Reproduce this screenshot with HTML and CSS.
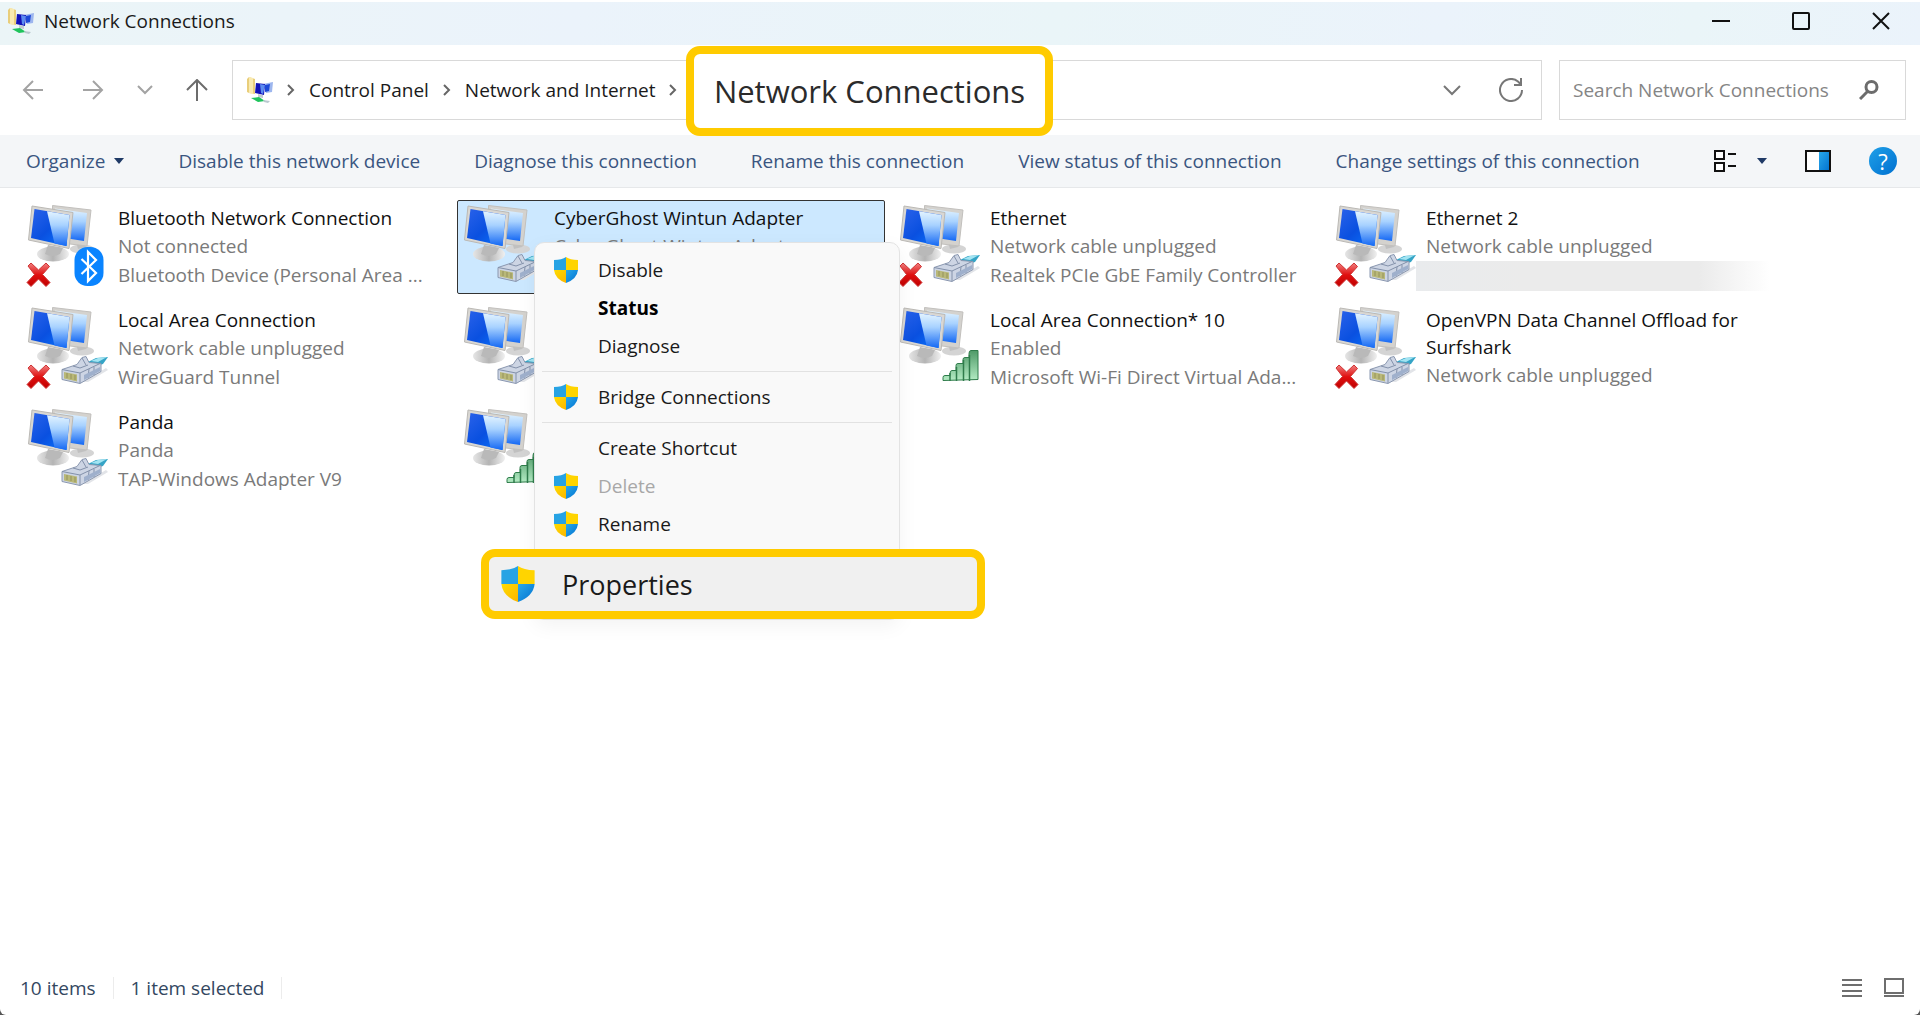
FILE: index.html
```
<!DOCTYPE html>
<html lang="en">
<head>
    <meta charset="UTF-8">
    <meta name="viewport" content="width=device-width, initial-scale=1.0">
    <title>Network Connections</title>
    <link rel="stylesheet" href="styles.css">
</head>
<body>
    <svg class="sprite" aria-hidden="true">
        <defs>
            <linearGradient id="screen" x1="0" y1="0" x2="1" y2="1">
                <stop offset="0" stop-color="#2a62ea"/>
                <stop offset="0.5" stop-color="#0a50e0"/>
                <stop offset="1" stop-color="#0a78ff"/>
            </linearGradient>
            <linearGradient id="glare" x1="0" y1="0" x2="0" y2="1">
                <stop offset="0" stop-color="#e4f4ff"/>
                <stop offset="0.4" stop-color="#a8d2ff"/>
                <stop offset="1" stop-color="#1468f4"/>
            </linearGradient>
            <linearGradient id="stand" x1="0" y1="0" x2="1" y2="0">
                <stop offset="0" stop-color="#e6e6e6"/>
                <stop offset="0.5" stop-color="#b4b4b4"/>
                <stop offset="1" stop-color="#f0f0f0"/>
            </linearGradient>
            <linearGradient id="bars" x1="0" y1="0" x2="0" y2="1">
                <stop offset="0" stop-color="#4f9a68"/>
                <stop offset="1" stop-color="#b4ecc4"/>
            </linearGradient>
            <linearGradient id="red" x1="0" y1="0" x2="0" y2="1">
                <stop offset="0" stop-color="#f08080"/>
                <stop offset="0.5" stop-color="#e01010"/>
                <stop offset="1" stop-color="#c00000"/>
            </linearGradient>
            <linearGradient id="blue" x1="0" y1="0" x2="1" y2="1">
                <stop offset="0" stop-color="#2aa9ea"/>
                <stop offset="1" stop-color="#0070d0"/>
            </linearGradient>
            <linearGradient id="gold" x1="0" y1="0" x2="1" y2="1">
                <stop offset="0" stop-color="#ffdc00"/>
                <stop offset="1" stop-color="#fbb500"/>
            </linearGradient>
        </defs>

        <symbol id="computers" viewBox="0 0 88 88">
            <ellipse cx="58" cy="46" rx="12" ry="4.500" fill="#d4d4d4"/>
            <path d="M52 38l2 8 8-2-2-6z" fill="#c0c0c0"/>
            <path d="M28.500 2.500L67 7l-4 36-34-4z" fill="#d4d2ce" stroke="#c2c0bd"/>
            <path d="M31 5.500l32 4.500-3 28-26-4z" fill="url(#glare)"/>
            <ellipse cx="29" cy="51" rx="16" ry="7.500" fill="url(#stand)"/>
            <path d="M24 42l-3 9q8 4 15 0l3-6z" fill="#b9b9b9"/>
            <path d="M8 3l41 6.500-4 36L4.500 37z" fill="#d9d7d3" stroke="#bbb9b5"/>
            <path d="M10.500 6l35 6-3 31L7 35z" fill="url(#screen)"/>
            <path d="M23 8.200L45.500 12l-3 31-12-2.500z" fill="url(#glare)"/>
        </symbol>
        <symbol id="unplugged" viewBox="0 0 88 88">
            <path d="M4 63l3-3 7.500 7 7.500-7 3.500 3.500-7 8 7.500 8-4 4-7.500-7.500-7.500 7.500-4-4 7.500-8z" fill="url(#red)" stroke="#cf3434" stroke-linejoin="round"/>
        </symbol>
        <symbol id="cable" viewBox="0 0 88 88">
            <path d="M58 77l24-14 2 2-20 12z" fill="#e2e4e8"/>
            <path d="M64 57l8-4 12-1-5 7-10 3z" fill="#35a4c6"/>
            <path d="M67 56l7-3 9-1-9 5z" fill="#a2e4f2"/>
            <path d="M38 64.500l15-5 5-7 4-1 3 6 12 1 0 8-21 12-18-4z" fill="#cdd5e4" stroke="#8b98b0"/>
            <path d="M38 64.500l18 3.500 20-9.500M56 68v10M49 61l7 2 8-3M58 53l4 7M65 64l-1 9M70 62v8" fill="none" stroke="#8391aa"/>
            <path d="M60 70l16-8v4l-16 9z" fill="#9fb0cc"/>
            <path d="M40 67l13 2.500v7l-13-3z" fill="#b9b878"/>
            <path d="M43 68v5M47 69v5M51 70v5" stroke="#94925c"/>
        </symbol>
        <symbol id="wifi" viewBox="0 0 88 88">
            <path d="M47 75.500v-3q0-2 2-2h5v-2q0-3 2-3h4v-5q0-2 2-2h5v-4q0-2 2-2h4v-4q0-3 2-3h7v29z" fill="url(#bars)" stroke="#2f7c4b" stroke-linejoin="round"/>
            <path d="M54 68v8M60.500 62v14M67.500 55v21M73.500 50v26" stroke="#2f7c4b" stroke-width="1.500"/>
        </symbol>
        <symbol id="bluetooth" viewBox="0 0 88 88">
            <rect x="50.500" y="44" width="29" height="39" rx="13" fill="#0a84ff"/>
            <path d="M57.500 56l14.500 14-8 8V49l8 8-14.500 14" fill="none" stroke="#fff" stroke-width="2.200"/>
        </symbol>
        <symbol id="shield" viewBox="0 0 26 26">
            <path d="M13 0Q9 3 1 3v10h12z" fill="#27a3e4"/>
            <path d="M13 0q4 3 12 3v10H13z" fill="#ffd400"/>
            <path d="M1 13q1 9 12 13V13z" fill="url(#gold)"/>
            <path d="M25 13q-1 9-12 13V13z" fill="url(#blue)"/>
        </symbol>
        <symbol id="net-folder" viewBox="0 0 26 26">
            <path d="M0 2l2-2 6 2v15l-6-1-2-1z" fill="#e9ce7a"/>
            <path d="M2 0l4 1v16l-4-1z" fill="#f9eab0"/>
            <path d="M16 7l10-2-1 10-6 1z" fill="#9db6ee"/>
            <path d="M18 8l5-1-1 7-4 1z" fill="#1c48d8"/>
            <path d="M9 6l9 1-1 11-9-2z" fill="#1212b8"/>
            <path d="M13 7l5 1-2 9-2-1z" fill="#5c8cf0"/>
            <path d="M11 17l5 1v3l-5-1z" fill="#c3c9d2"/>
            <path d="M4 21l8-1 6 4-7 1z" fill="#1fc45c"/>
            <path d="M16 23l7 1-2 2-4-1z" fill="#b9c7cf"/>
        </symbol>
        <symbol id="chevron" viewBox="0 0 8 12">
            <path d="M1 1l5 5-5 5" fill="none" stroke="#666" stroke-width="2"/>
        </symbol>
    </svg>

    <div class="window">
        <header class="titlebar">
            <svg class="folder-icon"><use href="#net-folder"/></svg>
            <h1>Network Connections</h1>
            <div class="window-buttons">
                <button type="button" aria-label="Minimize"><svg viewBox="0 0 18 18"><path d="M0 9h18"/></svg></button>
                <button type="button" aria-label="Maximize"><svg viewBox="0 0 18 18"><rect x="1" y="1" width="16" height="16" rx="1"/></svg></button>
                <button type="button" aria-label="Close"><svg viewBox="0 0 18 18"><path d="M1 1l16 16M17 1L1 17"/></svg></button>
            </div>
        </header>

        <nav class="navbar">
            <div class="nav-buttons">
                <button type="button" aria-label="Back"><svg class="pale" viewBox="0 0 22 22"><path d="M21 11H2M11 2l-9 9 9 9"/></svg></button>
                <button type="button" aria-label="Forward"><svg class="pale" viewBox="0 0 22 22"><path d="M1 11h19M11 2l9 9-9 9"/></svg></button>
                <button type="button" aria-label="Recent locations"><svg class="pale" viewBox="0 0 22 22"><path d="M4 7l7 7 7-7"/></svg></button>
                <button type="button" aria-label="Up"><svg viewBox="0 0 22 22"><path d="M11 22V1M1 11L11 1l10 10"/></svg></button>
            </div>
            <div class="address">
                <svg class="folder-icon"><use href="#net-folder"/></svg>
                <svg class="chevron"><use href="#chevron"/></svg>
                <a href="#">Control Panel</a>
                <svg class="chevron"><use href="#chevron"/></svg>
                <a href="#">Network and Internet</a>
                <svg class="chevron"><use href="#chevron"/></svg>
                <a class="current" href="#">Network Connections</a>
                <div class="address-buttons">
                    <button type="button" aria-label="Previous locations"><svg viewBox="0 0 24 24"><path d="M4 8l8 8 8-8"/></svg></button>
                    <button type="button" aria-label="Refresh"><svg viewBox="0 0 24 24"><path d="M23 12a11 11 0 1 1-4-8.500l3 3M22 0v7h-7"/></svg></button>
                </div>
            </div>
            <div class="search">
                <input type="text" aria-label="Search" placeholder="Search Network Connections">
                <svg viewBox="0 0 20 20"><circle cx="12.500" cy="7" r="5.500"/><path d="M9 11l-8 8"/></svg>
            </div>
        </nav>

        <div class="toolbar">
            <button type="button" class="organize">Organize <span class="arrow"></span></button>
            <button type="button">Disable this network device</button>
            <button type="button">Diagnose this connection</button>
            <button type="button">Rename this connection</button>
            <button type="button">View status of this connection</button>
            <button type="button">Change settings of this connection</button>
            <div class="toolbar-icons">
                <button type="button" class="view" aria-label="Change your view">
                    <svg width="24" height="24" viewBox="0 0 24 24"><path d="M2 2h9v8H2zM2 14h9v8H2z" fill="#fff" stroke="#111" stroke-width="2"/><path d="M15 5h8M15 17h8" stroke="#111" stroke-width="2"/></svg>
                    <span class="arrow"></span>
                </button>
                <button type="button" aria-label="Show the preview pane">
                    <svg width="26" height="24" viewBox="0 0 26 24"><path d="M1 2h24v20H1z" fill="#fff"/><path d="M14 2h11v20H14z" fill="url(#blue)"/><path d="M1 2h24v20H1z" fill="none" stroke="#111" stroke-width="2"/></svg>
                </button>
                <button type="button" class="help" aria-label="Help">?</button>
            </div>
        </div>

        <main class="files">
            <div class="item">
                <div class="icon"><svg><use href="#computers"/></svg><svg><use href="#unplugged"/></svg><svg><use href="#bluetooth"/></svg></div>
                <div class="text">
                    <h2>Bluetooth Network Connection</h2>
                    <p>Not connected</p>
                    <p>Bluetooth Device (Personal Area ...</p>
                </div>
            </div>
            <div class="item selected">
                <div class="icon"><svg><use href="#computers"/></svg><svg><use href="#cable"/></svg></div>
                <div class="text">
                    <h2>CyberGhost Wintun Adapter</h2>
                    <p>CyberGhost Wintun Adapter</p>
                </div>
            </div>
            <div class="item">
                <div class="icon"><svg><use href="#computers"/></svg><svg><use href="#unplugged"/></svg><svg><use href="#cable"/></svg></div>
                <div class="text">
                    <h2>Ethernet</h2>
                    <p>Network cable unplugged</p>
                    <p>Realtek PCIe GbE Family Controller</p>
                </div>
            </div>
            <div class="item">
                <div class="icon"><svg><use href="#computers"/></svg><svg><use href="#unplugged"/></svg><svg><use href="#cable"/></svg></div>
                <div class="text">
                    <h2>Ethernet 2</h2>
                    <p>Network cable unplugged</p>
                    <div class="hidden-name"></div>
                </div>
            </div>
            <div class="item">
                <div class="icon"><svg><use href="#computers"/></svg><svg><use href="#unplugged"/></svg><svg><use href="#cable"/></svg></div>
                <div class="text">
                    <h2>Local Area Connection</h2>
                    <p>Network cable unplugged</p>
                    <p>WireGuard Tunnel</p>
                </div>
            </div>
            <div class="item">
                <div class="icon"><svg><use href="#computers"/></svg><svg><use href="#cable"/></svg></div>
            </div>
            <div class="item">
                <div class="icon"><svg><use href="#computers"/></svg><svg><use href="#wifi"/></svg></div>
                <div class="text">
                    <h2>Local Area Connection* 10</h2>
                    <p>Enabled</p>
                    <p>Microsoft Wi-Fi Direct Virtual Ada...</p>
                </div>
            </div>
            <div class="item">
                <div class="icon"><svg><use href="#computers"/></svg><svg><use href="#unplugged"/></svg><svg><use href="#cable"/></svg></div>
                <div class="text">
                    <h2>OpenVPN Data Channel Offload for Surfshark</h2>
                    <p>Network cable unplugged</p>
                </div>
            </div>
            <div class="item">
                <div class="icon"><svg><use href="#computers"/></svg><svg><use href="#cable"/></svg></div>
                <div class="text">
                    <h2>Panda</h2>
                    <p>Panda</p>
                    <p>TAP-Windows Adapter V9</p>
                </div>
            </div>
            <div class="item">
                <div class="icon"><svg><use href="#computers"/></svg><svg><use href="#wifi"/></svg></div>
            </div>

            <div class="context-menu">
                <button type="button"><svg><use href="#shield"/></svg>Disable</button>
                <button type="button" class="default"><svg></svg>Status</button>
                <button type="button"><svg></svg>Diagnose</button>
                <hr>
                <button type="button"><svg><use href="#shield"/></svg>Bridge Connections</button>
                <hr>
                <button type="button"><svg></svg>Create Shortcut</button>
                <button type="button" disabled><svg><use href="#shield"/></svg>Delete</button>
                <button type="button"><svg><use href="#shield"/></svg>Rename</button>
                <button type="button" class="properties"><svg><use href="#shield"/></svg>Properties</button>
            </div>
        </main>

        <footer class="statusbar">
            <span>10 items</span>
            <span>1 item selected</span>
            <div class="layout-buttons">
                <button type="button" aria-label="Details"><svg viewBox="0 0 20 20"><path d="M0 2h20M0 7h20M0 13h20M0 18h20"/></svg></button>
                <button type="button" aria-label="Large icons"><svg viewBox="0 0 20 20"><path d="M1 1h18v14H1zM0 18h20"/></svg></button>
            </div>
        </footer>
    </div>
</body>
</html>
```
FILE: styles.css
```
* {
    box-sizing: border-box;
}

body {
    margin: 0;
    background: #555;
    color: #1a1a1a;
    font-family: "Open Sans", "Noto Sans", sans-serif;
    font-size: 19px;
}

h1, h2, p {
    margin: 0;
    font-size: inherit;
    font-weight: normal;
}

a {
    color: inherit;
    text-decoration: none;
}

button {
    padding: 0;
    border: none;
    background: none;
    color: inherit;
    font: inherit;
    white-space: nowrap;
}

button svg {
    display: block;
}

.sprite {
    position: absolute;
    width: 0;
    height: 0;
}

.window {
    display: flex;
    flex-direction: column;
    min-height: 100vh;
    background: white;
    border-radius: 0 0 6px 6px;
}

.folder-icon {
    width: 26px;
    height: 26px;
    flex: none;
}

/* Title bar */
.titlebar {
    display: flex;
    align-items: center;
    gap: 10px;
    height: 45px;
    padding: 0 30px 5px 8px;
    border-top: 2px solid white;
    background: linear-gradient(100deg, #ebf5f7, #ebf3fb 30%, #eaf5f8 55%, #ebf3fb 75%, #eaf5f8 88%, #ebf3fb);
}

.window-buttons {
    display: flex;
    gap: 62px;
    margin-left: auto;
}

.window-buttons svg {
    width: 18px;
    height: 18px;
    fill: none;
    stroke: #111;
    stroke-width: 2;
}

/* Navigation */
.navbar {
    display: flex;
    align-items: center;
    gap: 17px;
    height: 90px;
    padding: 0 14px 0 22px;
}

.nav-buttons {
    display: flex;
    gap: 30px;
    width: 193px;
}

.nav-buttons button:first-child {
    margin-right: 8px;
}

.nav-buttons svg {
    width: 22px;
    height: 22px;
    fill: none;
    stroke: #6c6c6c;
    stroke-width: 2;
}

.nav-buttons .pale {
    stroke: #a3a3a3;
}

.address {
    position: relative;
    display: flex;
    flex: 1;
    align-items: center;
    gap: 14px;
    height: 60px;
    padding: 0 18px 0 14px;
    border: 1px solid #d9d9d9;
}

.chevron {
    width: 8px;
    height: 12px;
    flex: none;
}

.current {
    position: absolute;
    top: -15px;
    left: 453px;
    width: 367px;
    height: 90px;
    border: 8px solid #ffcb00;
    border-radius: 14px;
    background: white;
    color: #2b2b2b;
    font-size: 31px;
    line-height: 74px;
    text-align: center;
    white-space: nowrap;
}

.address-buttons {
    display: flex;
    gap: 35px;
    margin-left: auto;
}

.address-buttons svg {
    width: 24px;
    height: 24px;
    fill: none;
    stroke: #777;
    stroke-width: 2;
}

.search {
    display: flex;
    align-items: center;
    width: 347px;
    height: 60px;
    padding: 0 26px 0 13px;
    border: 1px solid #d9d9d9;
}

.search input {
    flex: 1;
    min-width: 0;
    padding: 0;
    border: none;
    outline: none;
    font: inherit;
}

.search input::placeholder {
    color: #858585;
}

.search svg {
    width: 20px;
    height: 20px;
    fill: none;
    stroke: #6c6c6c;
    stroke-width: 3;
}

/* Toolbar */
.toolbar {
    display: flex;
    align-items: center;
    gap: 54px;
    height: 53px;
    padding: 0 23px 0 26px;
    border-bottom: 1px solid #e6e8ea;
    background: #f4f6f8;
    color: #3a5580;
}

.organize, .view {
    display: flex;
    align-items: center;
    gap: 9px;
}

.view {
    gap: 20px;
}

.arrow {
    border: 5px solid transparent;
    border-top: 6px solid #1f3a66;
    border-bottom: none;
}

.toolbar-icons {
    display: flex;
    align-items: center;
    gap: 38px;
    margin-left: auto;
}

.help {
    width: 28px;
    height: 28px;
    border-radius: 50%;
    background: linear-gradient(135deg, #1fa0e8, #0070d0);
    color: white;
    font-size: 22px;
    line-height: 28px;
}

/* Connections */
.files {
    position: relative;
    display: grid;
    flex: 1;
    grid-template-columns: repeat(auto-fill, 428px);
    grid-auto-rows: 94px;
    align-content: start;
    gap: 8px;
    padding: 12px 0 0 21px;
}

.item {
    display: flex;
    gap: 6px;
    padding: 2px 0 0 2px;
    border: 1px solid transparent;
    border-radius: 2px;
}

.selected {
    border-color: #333;
    background: #cce8ff;
}

.icon {
    display: grid;
    flex: none;
}

.icon svg {
    grid-area: 1 / 1;
    width: 88px;
    height: 88px;
}

.text {
    flex: 1;
    padding-top: 2px;
    color: #7a7a7a;
}

.text h2 {
    padding-right: 8px;
    color: #111;
    line-height: 27px;
}

.text p {
    line-height: 29px;
    white-space: nowrap;
}

.hidden-name {
    width: 354px;
    height: 30px;
    margin-left: -10px;
    background: linear-gradient(90deg, #e9ebed, #ebebeb 30%, #ebebeb 80%, white);
}

/* Context menu */
.context-menu {
    position: absolute;
    top: 54px;
    left: 534px;
    width: 366px;
    padding: 8px 0 0;
    border: 1px solid #e3e3e3;
    border-radius: 10px;
    background: #f9f9f9;
    box-shadow: 0 6px 20px rgba(0, 0, 0, 0.05);
}

.context-menu button {
    display: flex;
    align-items: center;
    gap: 19px;
    width: 100%;
    height: 38px;
    padding-left: 18px;
}

.context-menu svg {
    width: 26px;
    height: 26px;
}

.context-menu hr {
    height: 1px;
    margin: 6px 7px;
    border: none;
    background: #e2e2e2;
}

.context-menu .default {
    color: black;
    font-weight: bold;
}

.context-menu button:disabled {
    color: #a8a8a8;
}

.context-menu .properties {
    gap: 26px;
    width: 504px;
    height: 70px;
    margin: 6px 0 0 -54px;
    padding-left: 11px;
    border: 8px solid #ffcb00;
    border-radius: 14px;
    background: #f0f0f0;
    font-size: 27px;
}

.context-menu .properties svg {
    width: 36px;
    height: 36px;
}

/* Status bar */
.statusbar {
    display: flex;
    align-items: center;
    height: 54px;
    padding: 0 16px 0 3px;
    color: #33475f;
}

.statusbar span {
    padding: 0 17px;
    border-right: 1px solid #ececec;
    line-height: 22px;
}

.layout-buttons {
    display: flex;
    gap: 22px;
    margin-left: auto;
}

.layout-buttons svg {
    width: 20px;
    height: 20px;
    fill: none;
    stroke: #6e6e6e;
    stroke-width: 2;
}
```
